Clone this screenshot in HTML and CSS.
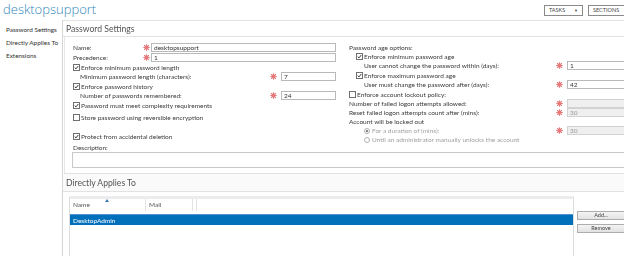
FILE: index.html
```html
<!DOCTYPE html>
<html>
<head>
  <title>desktopsupport</title>
  <link rel="stylesheet" href="styles.css">
</head>
<body>
<div class="page">

  <div class="topbar">
    <h1 class="title">desktopsupport</h1>
    <div class="top-btns">
      <div class="top-btn tasks">TASKS <span class="caret">&#9660;</span></div>
      <div class="top-btn sections">SECTIONS</div>
    </div>
  </div>

  <div class="main">
    <div class="nav">
      <div>Password Settings</div>
      <div>Directly Applies To</div>
      <div>Extensions</div>
    </div>

    <div class="content">
      <div class="sec-head">
        <h2>Password Settings</h2>
        <div class="sec-icons">
          <svg width="7" height="7" viewBox="0 0 7 7"><circle cx="3.5" cy="3.5" r="3" fill="#fff" stroke="#777" stroke-width="0.8"/><path d="M2.2 2.2 L4.8 4.8 M4.8 2.2 L2.2 4.8" stroke="#333" stroke-width="1"/></svg>
          <svg width="7" height="7" viewBox="0 0 7 7"><circle cx="3.5" cy="3.5" r="3" fill="#fff" stroke="#777" stroke-width="0.8"/><path d="M2.2 4.3 L3.5 3 L4.8 4.3" fill="none" stroke="#333" stroke-width="1"/></svg>
        </div>
      </div>

      <div class="sec-body pw">
        <div class="pw-cols">
          <div class="col left">
            <div class="row">
              <span class="lbl">Name:</span>
              <span class="star"></span>
              <input class="fld wide" type="text" value="desktopsupport" />
            </div>
            <div class="row">
              <span class="lbl">Precedence:</span>
              <span class="star"></span>
              <input class="fld wide" type="text" value="1" />
            </div>
            <div class="row chk"><span class="box on"></span>Enforce minimum password length</div>
            <div class="row sub">
              <span class="txt">Minimum password length (characters):</span>
              <span class="star"></span>
              <input class="fld small" type="text" value="7" />
            </div>
            <div class="row chk"><span class="box on"></span>Enforce password history</div>
            <div class="row sub">
              <span class="txt">Number of passwords remembered:</span>
              <span class="star"></span>
              <input class="fld small" type="text" value="24" />
            </div>
            <div class="row chk"><span class="box on"></span>Password must meet complexity requirements</div>
            <div class="row chk gap-s"><span class="box"></span>Store password using reversible encryption</div>
            <div class="row chk gap-l"><span class="box on"></span>Protect from accidental deletion</div>
          </div>

          <div class="col right">
            <div class="row">Password age options:</div>
            <div class="row chk in1 short"><span class="box on"></span>Enforce minimum password age</div>
            <div class="row sub in2 short">
              <span class="txt">User cannot change the password within (days):</span>
              <span class="star"></span>
              <input class="fld small" type="text" value="1" />
            </div>
            <div class="row chk in1"><span class="box on"></span>Enforce maximum password age</div>
            <div class="row sub in2 short">
              <span class="txt">User must change the password after (days):</span>
              <span class="star"></span>
              <input class="fld small" type="text" value="42" />
            </div>
            <div class="row chk"><span class="box"></span>Enforce account lockout policy:</div>
            <div class="row sub short">
              <span class="txt">Number of failed logon attempts allowed:</span>
              <span class="star"></span>
              <input class="fld small" type="text" value="" disabled />
            </div>
            <div class="row sub short">
              <span class="txt">Reset failed logon attempts count after (mins):</span>
              <span class="star"></span>
              <input class="fld small" type="text" value="30" disabled />
            </div>
            <div class="row short">Account will be locked out</div>
            <div class="row sub in2 short dim">
              <span class="radio on"></span>
              <span class="txt">For a duration of (mins):</span>
              <span class="star"></span>
              <input class="fld small" type="text" value="30" disabled />
            </div>
            <div class="row in2 short dim">
              <span class="radio"></span>
              <span class="txt">Until an administrator manually unlocks the account</span>
            </div>
          </div>
        </div>

        <div class="desc-lbl">Description:</div>
        <textarea class="desc"></textarea>
      </div>

      <div class="sec-head shaded">
        <h2>Directly Applies To</h2>
        <div class="sec-icons">
          <svg width="7" height="7" viewBox="0 0 7 7"><circle cx="3.5" cy="3.5" r="3" fill="#fff" stroke="#777" stroke-width="0.8"/><path d="M2.2 2.2 L4.8 4.8 M4.8 2.2 L2.2 4.8" stroke="#333" stroke-width="1"/></svg>
          <svg width="7" height="7" viewBox="0 0 7 7"><circle cx="3.5" cy="3.5" r="3" fill="#fff" stroke="#777" stroke-width="0.8"/><path d="M2.2 4.3 L3.5 3 L4.8 4.3" fill="none" stroke="#333" stroke-width="1"/></svg>
        </div>
      </div>

      <div class="applies">
        <div class="grid">
          <div class="grid-head">
            <div class="gcol name">Name<svg class="sort" width="4" height="3" viewBox="0 0 4 3"><path d="M0 3 L2 0 L4 3 Z" fill="#3b78b5"/></svg></div>
            <div class="gcol mail">Mail</div>
            <div class="gcol"></div>
          </div>
          <div class="grid-row selected">DesktopAdmin</div>
        </div>
        <div class="grid-btns">
          <div class="btn">Add...</div>
          <div class="btn">Remove</div>
        </div>
      </div>
    </div>
  </div>

</div>
</body>
</html>
```

FILE: styles.css
```css
body { margin: 0; font-family: Lato, "Open Sans", sans-serif; font-size: 6.5px; color: #3a3a3a; background: #fff; overflow: hidden; }
.page { width: 624px; height: 256px; overflow: hidden; }

/* top bar */
.topbar { width: 640px; height: 20px; display: flex; justify-content: space-between; align-items: flex-start; }
.title { margin: 0; padding-left: 3px; font-family: "Open Sans", sans-serif; font-size: 13px; font-weight: 300; color: #2f88b9; line-height: 19px; }
.top-btns { display: flex; gap: 5px; padding: 5px 10px 0 0; }
.top-btn { height: 11px; box-sizing: border-box; border: 1px solid #8a8a8a; background: #fff; font-size: 5.5px; line-height: 9px; padding: 0 4px; color: #444; }
.tasks { width: 39px; display: flex; justify-content: space-between; }
.caret { font-size: 4px; }
.sections { width: 42px; }

/* layout */
.main { display: flex; width: 640px; height: 236px; }
.nav { width: 63px; border-right: 1px solid #d6d6d6; padding: 3px 0 0 6px; box-sizing: border-box; flex: none; }
.nav div { line-height: 13px; font-size: 6.4px; color: #333; }
.content { flex: 1; border-top: 1px solid #e2e2e2; }

.sec-head { height: 15px; display: flex; align-items: center; justify-content: space-between; padding: 0 14px 0 3px; border-bottom: 1px solid #e2e2e2; }
.sec-head h2 { margin: 0; font-size: 8.6px; font-weight: normal; color: #555; }
.sec-icons { display: flex; gap: 1px; }
.shaded { height: 17px; background: #fafafa; }

/* password settings */
.sec-body { margin-left: 1px; border-left: 1px solid #e6e6e6; border-bottom: 1px solid #e2e2e2; }
.pw { padding: 5px 0 5px 8px; }
.pw-cols { display: flex; gap: 13px; }
.col.left { width: 263px; flex: none; }
.col.right { width: 280px; flex: none; }
.row { display: flex; align-items: center; height: 10px; white-space: nowrap; }
.row.sub, .row.short { height: 9px; }
.row.sub { padding-left: 7px; }
.right .row.sub { padding-left: 0; }
.right .in1 { padding-left: 7px; }
.right .in2 { padding-left: 15px; }
.right .row.sub.in2 { padding-left: 15px; }
.gap-s { margin-top: 2px; }
.gap-l { margin-top: 9px; }
.lbl { width: 70px; }
.txt { margin-right: auto; }
.dim { color: #a0a0a0; }

.star { width: 7px; height: 7px; margin-right: 1px; flex: none; background: url("data:image/svg+xml;utf8,<svg xmlns='http://www.w3.org/2000/svg' viewBox='0 0 8 8'><path d='M4 0.8V7.2M0.8 4H7.2M1.7 1.7L6.3 6.3M6.3 1.7L1.7 6.3' stroke='%23e4787a' stroke-width='1.3' stroke-linecap='round'/></svg>") center / contain no-repeat; }
.sub .star { margin-right: 4px; }

.fld { box-sizing: border-box; height: 9px; padding: 0 2px; border: 1px solid #b9b9b9; font-family: inherit; font-size: 6.5px; color: #333; background: #fff; outline: none; }
.fld.wide { width: 185px; }
.fld.small { width: 55px; }
.right .fld.small { width: 62px; }
.fld:disabled { background: #efefef; border-color: #d2d2d2; color: #9a9a9a; }

.box { width: 7px; height: 7px; box-sizing: border-box; border: 1px solid #707070; background: #fff; margin-right: 1px; flex: none; }
.box.on { background: #fff url("data:image/svg+xml;utf8,<svg xmlns='http://www.w3.org/2000/svg' viewBox='0 0 5 5'><path d='M0.7 2.6L2 3.9L4.3 1' fill='none' stroke='%23222' stroke-width='0.9'/></svg>") center / 5px 5px no-repeat; }
.radio { width: 6px; height: 6px; box-sizing: border-box; border: 1px solid #b0b0b0; border-radius: 50%; margin-right: 2px; flex: none; background: #fff; }
.radio.on { background: radial-gradient(circle, #888 0 1.3px, #fff 1.6px); }

.desc-lbl { height: 8px; line-height: 8px; }
.desc { display: block; box-sizing: border-box; width: 600px; height: 16px; margin: 0 0 0 -1px; border: 1px solid #c8c8c8; resize: none; }

/* directly applies to */
.applies { display: flex; gap: 3px; padding: 4px 0 0 6px; }
.grid { width: 505px; height: 60px; flex: none; box-sizing: border-box; border-left: 1px solid #dcdcdc; border-right: 1px solid #dcdcdc; border-top: 3px solid #ececec; }
.grid-head { display: flex; height: 12px; }
.gcol { position: relative; height: 12px; line-height: 12px; padding-left: 3px; box-sizing: border-box; border-right: 1px solid #e4e4e4; color: #555; }
.gcol.name { width: 76px; }
.gcol.mail { width: 47px; }
.sort { position: absolute; left: 35px; top: 0; }
.grid-row { height: 11px; line-height: 11px; padding-left: 3px; margin-top: 3px; }
.selected { background: #0070ba; border-top: 1px solid #4d93cc; box-sizing: border-box; color: #fff; }
.grid-btns { display: flex; flex-direction: column; gap: 4px; padding-top: 15px; flex: none; }
.btn { width: 48px; height: 9px; box-sizing: border-box; border: 1px solid #adadad; background: linear-gradient(#f4f4f4, #e2e2e2); text-align: center; line-height: 7px; font-size: 5.5px; color: #444; }
```
